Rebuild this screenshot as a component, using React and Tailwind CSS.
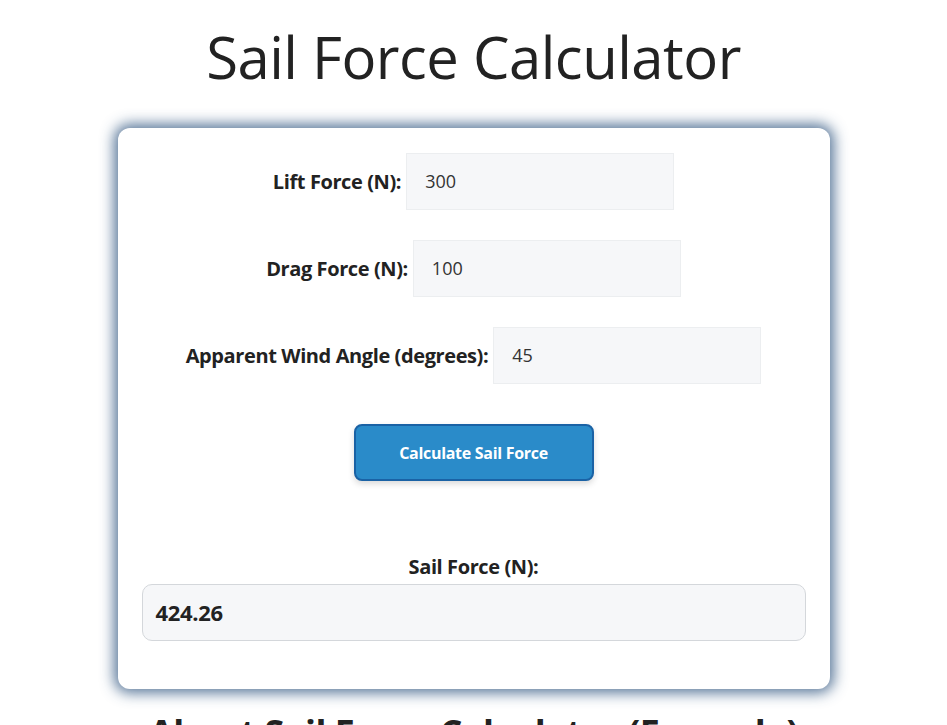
export default function App() {
  const font = { fontFamily: '"Open Sans", "Noto Sans", sans-serif' };
  const rows = [
    { label: "Lift Force (N):", value: "300" },
    { label: "Drag Force (N):", value: "100" },
    { label: "Apparent Wind Angle (degrees):", value: "45" },
  ];
  return (
    <div className="w-[947px] h-[725px] overflow-hidden bg-white text-[#222]" style={font}>
      <h1 className="text-center text-[58px] leading-none font-normal tracking-[-0.5px] pt-[28px] text-[#222]">
        Sail Force Calculator
      </h1>
      <div className="mx-auto mt-[42px] w-[712px] rounded-[12px] bg-white shadow-[0_0_14px_4px_rgba(60,95,135,0.85)] px-[24px] pt-[25px] pb-[48px]">
        <div className="flex flex-col gap-[30px]">
          {rows.map((r) => (
            <div key={r.label} className="flex items-center justify-center gap-[5px]">
              <label className="text-[20px] font-bold text-[#222] tracking-[-0.4px]">{r.label}</label>
              <div className="w-[268px] h-[57px] bg-[#f6f7f9] border border-[#eceef0] flex items-center pl-[18px] text-[18px] text-[#333]">
                {r.value}
              </div>
            </div>
          ))}
        </div>
        <div className="flex justify-center mt-[40px]">
          <button className="w-[240px] h-[57px] rounded-[8px] bg-[#2a8bc9] border-2 border-[#1a62a5] text-white font-bold text-[16px] tracking-[-0.3px] shadow-[0_3px_6px_rgba(0,0,0,0.15)]">
            Calculate Sail Force
          </button>
        </div>
        <div className="mt-[71px] text-center text-[20px] font-bold text-[#222] tracking-[-0.4px]">Sail Force (N):</div>
        <div className="mt-[2px] h-[57px] rounded-[10px] bg-[#f6f7f9] border border-[#d4d7db] flex items-center pl-[13px] text-[22px] font-bold text-[#222] tracking-[-0.3px]">
          424.26
        </div>
      </div>
      <h2 className="text-center text-[36px] leading-none font-bold mt-[26px] text-[#222] tracking-[-0.5px]">About Sail Force Calculator (Formula)</h2>
    </div>
  );
}
